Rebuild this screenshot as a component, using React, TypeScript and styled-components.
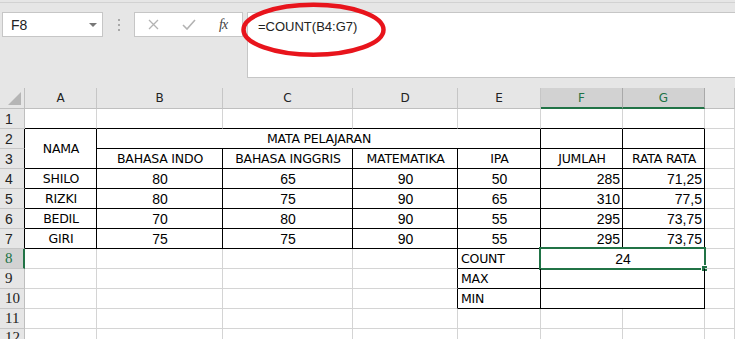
import React from "react";
import styled, { createGlobalStyle } from "styled-components";

const GREEN = "#217346";
const GRID = "#d4d4d4";
const HEAD_LINE = "#bfbfbf";

const GlobalStyle = createGlobalStyle`
  html, body { margin: 0; padding: 0; background: #e6e6e6; }
  body { width: 735px; height: 339px; overflow: hidden; }
`;

const Page = styled.div`
  position: relative;
  width: 735px;
  height: 339px;
  overflow: hidden;
  background: #e6e6e6;
`;

const TopBar = styled.div`
  height: 86px;
  box-sizing: border-box;
  border-top: 1px solid #d2d2d2;
  margin-top: 2px;
  padding: 9px 0 0 2px;
  display: flex;
  align-items: flex-start;
`;

const NameBox = styled.div`
  width: 101px;
  height: 25px;
  box-sizing: border-box;
  background: #fff;
  border: 1px solid #c6c6c6;
  display: flex;
  align-items: center;
  justify-content: space-between;
  padding: 0 5px 0 8px;
  font-family: "Liberation Sans", Arial, sans-serif;
  font-size: 14px;
  color: #222;
`;

const DropArrow = styled.span`
  width: 0;
  height: 0;
  border-left: 4px solid transparent;
  border-right: 4px solid transparent;
  border-top: 4px solid #777;
`;

const Grip = styled.div`
  width: 31px;
  height: 25px;
  display: flex;
  flex-direction: column;
  align-items: center;
  justify-content: center;
  gap: 3px;
`;

const Dot = styled.span`
  width: 2px;
  height: 2px;
  background: #a8a8a8;
`;

const FxBox = styled.div`
  width: 109px;
  height: 25px;
  box-sizing: border-box;
  background: #fff;
  border: 1px solid #c6c6c6;
  display: flex;
  align-items: center;
  padding-left: 13px;
  gap: 23px;
`;

const FxLabel = styled.span`
  font-family: "Liberation Serif", "Times New Roman", serif;
  font-style: italic;
  font-size: 14px;
  color: #444;
  letter-spacing: -1px;
`;

const FormulaBar = styled.div`
  flex: 1;
  margin-left: 4px;
  height: 66px;
  box-sizing: border-box;
  background: #fff;
  border: 1px solid #c6c6c6;
  border-right: none;
  padding: 4px 0 0 10px;
  font-family: "Liberation Sans", Arial, sans-serif;
  font-size: 13px;
  line-height: 20px;
  color: #222;
`;

const Annotation = styled.svg`
  position: absolute;
  left: 0;
  top: 0;
  pointer-events: none;
`;

const Sheet = styled.div`
  display: grid;
  grid-template-columns: 25px 72px 126px 130px 105px 83px 82px 82px 1fr;
  grid-template-rows: 21px repeat(11, 20px) 1fr;
  height: 251px;
  background: #fff;
`;

const Corner = styled.div`
  grid-column: 1;
  grid-row: 1;
  position: relative;
  background: #e6e6e6;
  border-right: 1px solid ${HEAD_LINE};
  border-bottom: 1px solid ${HEAD_LINE};
  box-sizing: border-box;

  &::after {
    content: "";
    position: absolute;
    right: 3px;
    bottom: 3px;
    width: 0;
    height: 0;
    border-left: 13px solid transparent;
    border-bottom: 13px solid #b5b5b5;
  }
`;

const ColHead = styled.div<{ $c: number; $sel: boolean }>`
  grid-column: ${(p) => p.$c + 1};
  grid-row: 1;
  box-sizing: border-box;
  background: ${(p) => (p.$sel ? "#d2d2d2" : "#e6e6e6")};
  border-right: 1px solid ${(p) => (p.$sel ? "#a9a9a9" : "#c6c6c6")};
  border-bottom: ${(p) => (p.$sel ? `2px solid ${GREEN}` : `1px solid ${HEAD_LINE}`)};
  display: flex;
  align-items: center;
  justify-content: center;
  font-family: "DejaVu Sans", sans-serif;
  font-size: 12px;
  color: ${(p) => (p.$sel ? GREEN : "#222")};
`;

const RowHead = styled.div<{ $r: number; $sel: boolean; $edge: boolean; $serif: boolean }>`
  grid-column: 1;
  grid-row: ${(p) => p.$r + 1};
  box-sizing: border-box;
  background: ${(p) => (p.$sel ? "#d2d2d2" : "#e6e6e6")};
  border-bottom: 1px solid #c6c6c6;
  border-right: ${(p) =>
    p.$sel ? `2px solid ${GREEN}` : `1px solid ${p.$edge ? "#000" : HEAD_LINE}`};
  display: flex;
  align-items: center;
  padding-left: 5px;
  font-family: ${(p) =>
    p.$serif ? '"Liberation Serif", "Times New Roman", serif' : '"Liberation Sans", Arial, sans-serif'};
  font-size: ${(p) => (p.$serif ? "15px" : "14px")};
  color: ${(p) => (p.$sel ? GREEN : "#222")};
`;

type Align = "left" | "center" | "right";
type Kind = "label" | "num";

const Cell = styled.div<{
  $c: number;
  $r: number;
  $cs: number;
  $rs: number;
  $rb: boolean;
  $bb: boolean;
  $align: Align;
  $kind: Kind;
}>`
  grid-column: ${(p) => p.$c + 1} / span ${(p) => p.$cs};
  grid-row: ${(p) => p.$r + 1} / span ${(p) => p.$rs};
  position: relative;
  box-sizing: border-box;
  border-right: 1px solid ${(p) => (p.$rb ? "#000" : GRID)};
  border-bottom: 1px solid ${(p) => (p.$bb ? "#000" : GRID)};
  display: flex;
  align-items: center;
  justify-content: ${(p) =>
    p.$align === "left" ? "flex-start" : p.$align === "right" ? "flex-end" : "center"};
  padding: 0 2px 0 3px;
  white-space: nowrap;
  font-family: ${(p) =>
    p.$kind === "num" ? '"Liberation Sans", Arial, sans-serif' : '"DejaVu Sans", sans-serif'};
  font-size: ${(p) => (p.$kind === "num" ? "14px" : "12.5px")};
  letter-spacing: ${(p) => (p.$kind === "num" ? "0" : "-0.2px")};
  color: #000;
`;

const Selection = styled.div`
  position: absolute;
  left: -2px;
  top: -2px;
  right: -2px;
  bottom: -2px;
  border: 2px solid ${GREEN};
  pointer-events: none;

  &::after {
    content: "";
    position: absolute;
    right: -4px;
    bottom: -4px;
    width: 5px;
    height: 5px;
    background: ${GREEN};
    border: 1px solid #fff;
  }
`;

const Glyph = ({ kind }: { kind: "x" | "check" }) =>
  kind === "x" ? (
    <svg width="11" height="11" viewBox="0 0 11 11">
      <path d="M1 1 L10 10 M10 1 L1 10" stroke="#b3b3b3" strokeWidth="1.3" fill="none" />
    </svg>
  ) : (
    <svg width="14" height="11" viewBox="0 0 14 11">
      <path d="M1 6 L5 10 L13 1" stroke="#b3b3b3" strokeWidth="1.6" fill="none" />
    </svg>
  );

const COLS = ["A", "B", "C", "D", "E", "F", "G", ""];

interface CellDef {
  text: string;
  align: Align;
  kind: Kind;
  cs?: number;
  rs?: number;
  selected?: boolean;
}

const content: Record<string, CellDef> = {
  "1,2": { text: "NAMA", align: "center", kind: "label", rs: 2 },
  "2,2": { text: "MATA PELAJARAN", align: "center", kind: "label", cs: 4 },
  "2,3": { text: "BAHASA INDO", align: "center", kind: "label" },
  "3,3": { text: "BAHASA INGGRIS", align: "center", kind: "label" },
  "4,3": { text: "MATEMATIKA", align: "center", kind: "label" },
  "5,3": { text: "IPA", align: "center", kind: "label" },
  "6,3": { text: "JUMLAH", align: "center", kind: "label" },
  "7,3": { text: "RATA RATA", align: "center", kind: "label" },
  "5,8": { text: "COUNT", align: "left", kind: "label" },
  "6,8": { text: "24", align: "center", kind: "num", cs: 2, selected: true },
  "5,9": { text: "MAX", align: "left", kind: "label" },
  "6,9": { text: "", align: "center", kind: "num", cs: 2 },
  "5,10": { text: "MIN", align: "left", kind: "label" },
  "6,10": { text: "", align: "center", kind: "num", cs: 2 },
};

const students = [
  ["SHILO", "80", "65", "90", "50", "285", "71,25"],
  ["RIZKI", "80", "75", "90", "65", "310", "77,5"],
  ["BEDIL", "70", "80", "90", "55", "295", "73,75"],
  ["GIRI", "75", "75", "90", "55", "295", "73,75"],
];

students.forEach((row, i) => {
  row.forEach((val, j) => {
    const c = j + 1;
    content[`${c},${i + 4}`] = {
      text: val,
      align: c >= 6 ? "right" : "center",
      kind: c === 1 ? "label" : "num",
    };
  });
});

const isBordered = (c: number, r: number) =>
  (r >= 2 && r <= 7 && c >= 1 && c <= 7) || (r >= 8 && r <= 10 && c >= 5 && c <= 7);

function buildCells() {
  const covered = new Set<string>();
  const cells: React.ReactNode[] = [];
  for (let r = 1; r <= 12; r++) {
    for (let c = 1; c <= 8; c++) {
      const key = `${c},${r}`;
      if (covered.has(key)) continue;
      const def = content[key];
      const cs = def?.cs ?? 1;
      const rs = def?.rs ?? 1;
      for (let dr = 0; dr < rs; dr++)
        for (let dc = 0; dc < cs; dc++) covered.add(`${c + dc},${r + dr}`);
      const own = isBordered(c, r);
      cells.push(
        <Cell
          key={key}
          $c={c}
          $r={r}
          $cs={cs}
          $rs={rs}
          $rb={own || isBordered(c + cs, r)}
          $bb={own || isBordered(c, r + rs)}
          $align={def?.align ?? "left"}
          $kind={def?.kind ?? "label"}
        >
          {def?.text}
          {def?.selected && <Selection />}
        </Cell>
      );
    }
  }
  return cells;
}

export default function App() {
  return (
    <Page>
      <GlobalStyle />
      <TopBar>
        <NameBox>
          F8
          <DropArrow />
        </NameBox>
        <Grip>
          <Dot />
          <Dot />
          <Dot />
        </Grip>
        <FxBox>
          <Glyph kind="x" />
          <Glyph kind="check" />
          <FxLabel>fx</FxLabel>
        </FxBox>
        <FormulaBar>=COUNT(B4:G7)</FormulaBar>
      </TopBar>
      <Sheet>
        <Corner />
        {COLS.map((l, i) => (
          <ColHead key={i} $c={i + 1} $sel={l === "F" || l === "G"}>
            {l}
          </ColHead>
        ))}
        {Array.from({ length: 12 }, (_, i) => i + 1).map((r) => (
          <RowHead key={r} $r={r} $sel={r === 8} $edge={r >= 2 && r <= 7} $serif={r >= 8}>
            {r}
          </RowHead>
        ))}
        {buildCells()}
      </Sheet>
      <Annotation width="735" height="88" viewBox="0 0 735 88">
        <ellipse cx="313.5" cy="29.8" rx="70" ry="25" fill="none" stroke="#e8141c" strokeWidth="4.5" />
      </Annotation>
    </Page>
  );
}
